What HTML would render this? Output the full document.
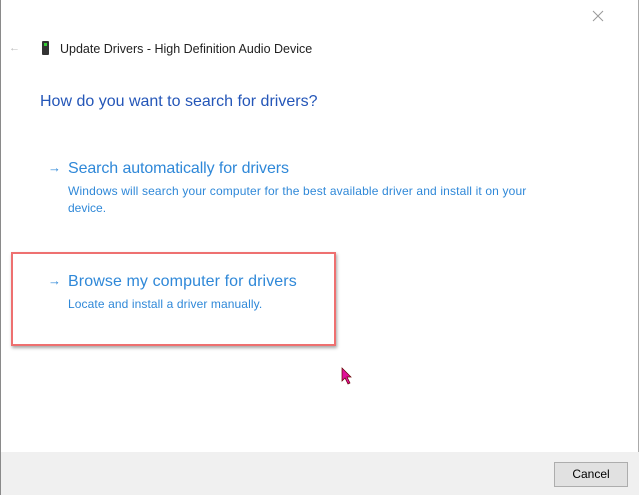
<!DOCTYPE html>
<html><head><meta charset="utf-8"><style>
html,body{margin:0;padding:0;}
body{width:640px;height:496px;position:relative;background:#fff;font-family:"Liberation Sans",sans-serif;overflow:hidden;}
.frame{position:absolute;left:0;top:0;width:639px;height:495px;border-left:1px solid #8a8a8a;border-bottom:1px solid #8a8a8a;border-right:1px solid #aaa;box-sizing:border-box;}
.t{position:absolute;white-space:nowrap;}
.footer{position:absolute;left:1px;right:1px;top:452px;bottom:1px;background:#f0f0f0;}
.btn{position:absolute;left:554px;top:462px;width:74px;height:25px;background:#e1e1e1;border:1px solid #adadad;box-sizing:border-box;font-size:12px;color:#000;text-align:center;line-height:23px;}
.box{position:absolute;left:11px;top:252px;width:325px;height:94px;border:2px solid #ee7070;box-sizing:border-box;box-shadow:1px 2px 3px rgba(0,0,0,0.35);}
.blue{color:#2f88d8;}
</style></head><body>
<div class="frame"></div>
<svg style="position:absolute;left:592px;top:10px" width="12" height="12"><path d="M1 1L11 11M11 1L1 11" stroke="#999" stroke-width="1"/></svg>
<div class="t" style="left:9px;top:42px;font-size:11px;color:#bbb">&#8592;</div>
<div style="position:absolute;left:42px;top:41px;width:7px;height:14px;background:#333;border-radius:1px"></div>
<div style="position:absolute;left:44px;top:43px;width:3px;height:3px;background:#3c3"></div>
<div class="t" style="left:60px;top:42px;font-size:12.5px;color:#222">Update Drivers - High Definition Audio Device</div>
<div class="t" style="left:40px;top:93px;font-size:16px;color:#2456b8">How do you want to search for drivers?</div>
<div class="t blue" style="left:48px;top:160px;font-size:13px">&#8594;</div>
<div class="t blue" style="left:68px;top:160px;font-size:16px;letter-spacing:-0.1px">Search automatically for drivers</div>
<div class="t blue" style="left:68px;top:184px;font-size:12px;letter-spacing:0.15px">Windows will search your computer for the best available driver and install it on your</div>
<div class="t blue" style="left:68px;top:201px;font-size:12px">device.</div>
<div class="box"></div>
<div class="t blue" style="left:48px;top:273px;font-size:13px">&#8594;</div>
<div class="t blue" style="left:68px;top:273px;font-size:16px;letter-spacing:0.1px">Browse my computer for drivers</div>
<div class="t blue" style="left:68px;top:297px;font-size:12px;letter-spacing:0.1px">Locate and install a driver manually.</div>
<svg style="position:absolute;left:341px;top:367px" width="12" height="18"><path d="M1 1L1 14L4 11L7 17L9 16L6 10L10 10Z" fill="#e0109a" stroke="#600" stroke-width="0.7"/></svg>
<div class="footer"></div>
<div class="btn">Cancel</div>
</body></html>
